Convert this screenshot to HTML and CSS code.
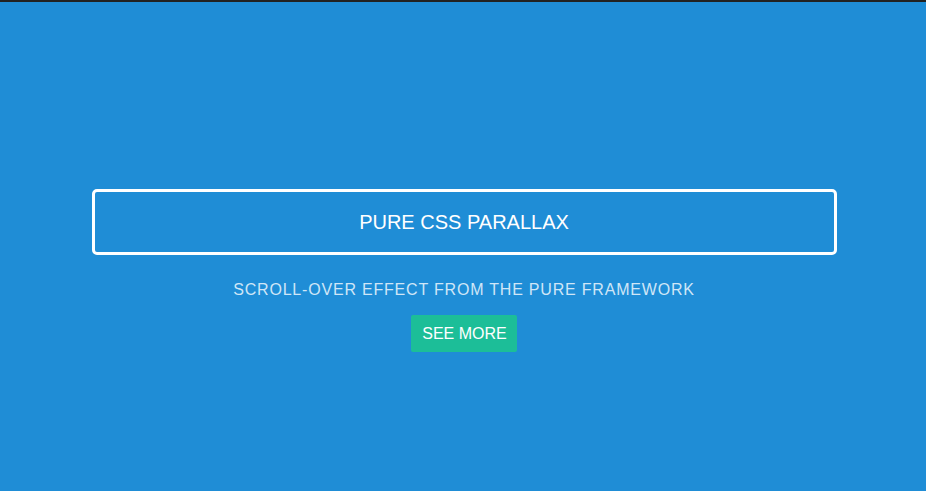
FILE: index.html
```html
<!DOCTYPE html>
<html lang="en">
<head>
    <meta charset="UTF-8">
    <meta name="viewport" content="width=device-width, initial-scale=1.0">
    <title>Pure CSS Parallax</title>
    <link rel="stylesheet" href="styles.css">
</head>
<body>
    <div class="splash-container">
        <div class="splash">
            <h1 class="splash-head">Pure CSS Parallax</h1>
            <p class="splash-subhead">Scroll-over effect from the Pure framework</p>
            <a href="#" class="splash-btn">See More</a>
        </div>
    </div>
</body>
</html>
```

FILE: styles.css
```css
html, body {
    margin: 0;
    height: 100%;
}

body {
    background: #1f8dd6;
    border-top: 2px solid #222;
    box-sizing: border-box;
    font-family: "Liberation Sans", Arial, sans-serif;
    overflow: hidden;
}

/* 顶部全屏区域 */
.splash-container {
    height: 100%;
    display: flex;
    justify-content: center;
    padding: 187px 0 0 2px;
    box-sizing: border-box;
}

.splash {
    width: 745px;
    text-align: center;
}

.splash-head {
    margin: 0;
    border: 3px solid #fff;
    border-radius: 5px;
    height: 66px;
    box-sizing: border-box;
    display: flex;
    align-items: center;
    justify-content: center;
    color: #fff;
    font-size: 20px;
    font-weight: normal;
    text-transform: uppercase;
}

.splash-subhead {
    margin: 25px 0 0;
    color: #cfe6f7;
    font-size: 16px;
    letter-spacing: 0.05em;
    text-transform: uppercase;
    line-height: 20px;
}

.splash-btn {
    display: inline-block;
    margin-top: 15px;
    padding: 9px 10px 9px 11px;
    background: #1cbe98;
    border-radius: 2px;
    color: #fff;
    font-size: 16px;
    line-height: 19px;
    text-decoration: none;
    text-transform: uppercase;
}
```
